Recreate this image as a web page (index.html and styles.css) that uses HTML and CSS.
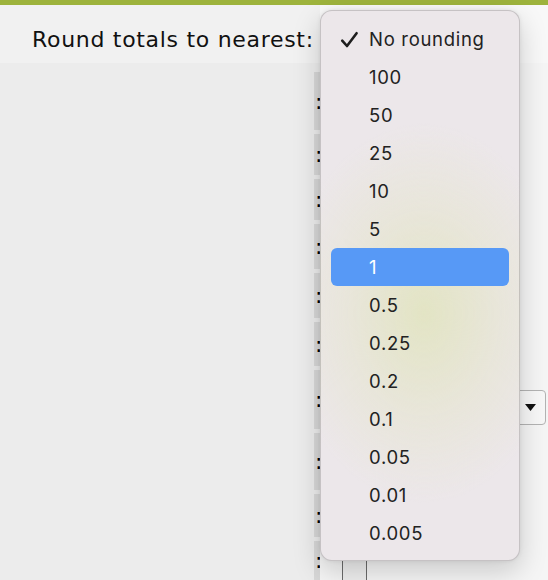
FILE: index.html
```html
<!DOCTYPE html>
<html>
<head>
<meta charset="utf-8">
<title>Rounding</title>
<link rel="stylesheet" href="styles.css">
</head>
<body>
<div class="topbar"></div>
<div class="header">
  <div class="head-label">Round totals to nearest:</div>
  <div class="head-rest"></div>
</div>
<div class="content">
  <div class="labels">
    <div class="row r60"><div class="lab"></div><div class="tick">:</div></div>
    <div class="row r42"><div class="lab"></div><div class="tick">:</div></div>
    <div class="row r42"><div class="lab"></div><div class="tick">:</div></div>
    <div class="row r46"><div class="lab"></div><div class="tick">:</div></div>
    <div class="row r46"><div class="lab"></div><div class="tick">:</div></div>
    <div class="row r46"><div class="lab"></div><div class="tick">:</div></div>
    <div class="row r60"><div class="lab"></div><div class="tick">:</div></div>
    <div class="row r59"><div class="lab"></div><div class="tick">:</div></div>
    <div class="row r44"><div class="lab"></div><div class="tick">:</div></div>
    <div class="row r40"><div class="lab"></div><div class="tick">:</div></div>
  </div>
  <div class="fields">
    <div class="select">
      <svg class="arrow" width="11" height="7" viewBox="0 0 11 7"><path d="M0 0 H11 L5.5 7 Z" fill="#111"/></svg>
    </div>
    <div class="checkbox"></div>
  </div>
</div>

<div class="menu">
  <div class="item checked">
    <svg class="check" width="19" height="17" viewBox="0 0 19 17"><path d="M2.2 9.6 L7 15 L16.6 2.2" fill="none" stroke="#1e1e1e" stroke-width="2.6" stroke-linecap="round" stroke-linejoin="round"/></svg>
    <span>No rounding</span>
  </div>
  <div class="item"><span>100</span></div>
  <div class="item"><span>50</span></div>
  <div class="item"><span>25</span></div>
  <div class="item"><span>10</span></div>
  <div class="item"><span>5</span></div>
  <div class="item active"><span>1</span></div>
  <div class="item"><span>0.5</span></div>
  <div class="item"><span>0.25</span></div>
  <div class="item"><span>0.2</span></div>
  <div class="item"><span>0.1</span></div>
  <div class="item"><span>0.05</span></div>
  <div class="item"><span>0.01</span></div>
  <div class="item"><span>0.005</span></div>
</div>
</body>
</html>
```
FILE: styles.css
```css
html, body {
  margin: 0;
  padding: 0;
  height: 580px;
  overflow: hidden;
}
body {
  background: #f8f8f8;
  font-family: "DejaVu Sans", Verdana, sans-serif;
  position: relative;
}
.topbar {
  height: 5px;
  background: #9db33c;
}
.header {
  display: flex;
  height: 58px;
}
.head-label {
  width: 320px;
  box-sizing: border-box;
  background: #f1f1f1;
  padding: 11px 0 0 32px;
  line-height: 47px;
  font-size: 22px;
  letter-spacing: 0.7px;
  color: #111;
  white-space: nowrap;
  overflow: hidden;
}
.head-rest {
  flex: 1;
  background: #f8f8f8;
}
.content {
  display: flex;
  height: 517px;
}
.labels {
  width: 320px;
  background: #ececec;
  padding-top: 9px;
  display: flex;
  flex-direction: column;
  gap: 4px;
}
.row {
  display: flex;
}
.r60 { height: 60px; }
.r59 { height: 59px; }
.r46 { height: 46px; }
.r44 { height: 44px; }
.r42 { height: 42px; }
.r40 { height: 40px; }
.lab {
  flex: 1;
}
.tick {
  width: 6px;
  box-sizing: border-box;
  padding-left: 1px;
  background: #d8d8d8;
  font-size: 22px;
  color: #000;
  display: flex;
  align-items: center;
  overflow: visible;
}
.fields {
  flex: 1;
  background: #f5f5f5;
  display: flex;
  flex-direction: column;
}
.select {
  margin-top: 327px;
  margin-left: 160px;
  width: 66px;
  height: 35px;
  flex-shrink: 0;
  box-sizing: border-box;
  border: 1px solid #b3b3b3;
  border-radius: 4px;
  background: #f7f7f7;
  display: flex;
  align-items: center;
  justify-content: flex-end;
  padding-right: 9px;
}
.arrow {
  display: block;
}
.checkbox {
  margin-top: 131px;
  margin-left: 22px;
  width: 25px;
  height: 34px;
  flex-shrink: 0;
  box-sizing: border-box;
  border: 1px solid #6b6b6b;
  border-radius: 3px;
  background: #efefef;
}
.menu {
  position: absolute;
  left: 320px;
  top: 10px;
  width: 200px;
  height: 551px;
  box-sizing: border-box;
  padding: 9px 10px;
  border: 1px solid rgba(0,0,0,0.16);
  border-radius: 12px;
  background:
    radial-gradient(ellipse 140px 190px at 52% 55%, rgba(226,228,194,0.95), rgba(230,229,208,0.6) 55%, rgba(236,231,234,0) 100%),
    #ece7ea;
  box-shadow: 0 10px 28px rgba(0,0,0,0.18), 0 0 4px rgba(0,0,0,0.08);
  font-family: Inter, "Noto Sans", sans-serif;
  font-size: 18.5px;
  letter-spacing: 0.7px;
  color: #222;
}
.item {
  position: relative;
  height: 38px;
  box-sizing: border-box;
  padding-left: 38px;
  display: flex;
  align-items: center;
  border-radius: 6px;
}
.item.active {
  background: #5799f6;
  color: #fff;
}
.check {
  position: absolute;
  left: 9px;
  top: 11px;
}
```
